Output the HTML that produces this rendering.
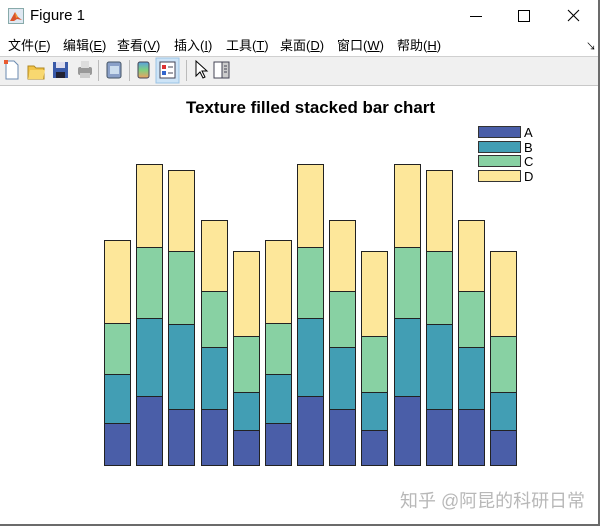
<!DOCTYPE html>
<html><head><meta charset="utf-8"><style>
body{margin:0;width:600px;height:526px;overflow:hidden;background:#fff;font-family:"Liberation Sans","Noto Sans CJK SC",sans-serif;position:relative}
.a{position:absolute}
.menu span{position:absolute;top:35px;font-size:13px;color:#000}
</style></head><body>
<div class="a" style="left:0;top:0;width:598px;height:524px;border-right:2px solid #6b6b6b;border-bottom:2px solid #6b6b6b"></div>
<!-- title bar -->
<svg class="a" style="left:8px;top:8px" width="16" height="16"><rect x="0.5" y="0.5" width="15" height="15" fill="#dfe8f2" stroke="#8aa"/><path d="M2 13 L7 4 L10 9 L14 12 L9 11 L6 13Z" fill="#d9532b"/><path d="M7 4 L10 9 L8 10Z" fill="#f09a3a"/></svg>
<div class="a" style="left:30px;top:7px;font-size:15px">Figure 1</div>
<div class="a" style="left:470px;top:16px;width:12px;height:1px;background:#000"></div>
<div class="a" style="left:518px;top:10px;width:10px;height:10px;border:1px solid #000"></div>
<svg class="a" style="left:567px;top:9px" width="13" height="13"><path d="M1 1L12 12M12 1L1 12" stroke="#000" stroke-width="1.1"/></svg>
<!-- menu -->
<div class="menu">
<span style="left:8px">文件(<u>F</u>)</span>
<span style="left:63px">编辑(<u>E</u>)</span>
<span style="left:117px">查看(<u>V</u>)</span>
<span style="left:174px">插入(<u>I</u>)</span>
<span style="left:226px">工具(<u>T</u>)</span>
<span style="left:280px">桌面(<u>D</u>)</span>
<span style="left:337px">窗口(<u>W</u>)</span>
<span style="left:397px">帮助(<u>H</u>)</span>
</div>
<div class="a" style="left:586px;top:38px;font-size:10px">↘</div>
<!-- toolbar -->
<div class="a" style="left:0;top:56px;width:598px;height:28px;background:#f0f0f0;border-top:1px solid #d0d0d0;border-bottom:1px solid #c8c8c8"></div>
<svg class="a" style="left:0;top:57px" width="240" height="27">
<path d="M6 4h8l4 4v14H6z" fill="#fff" stroke="#6a8ab0"/><rect x="4" y="3" width="4" height="4" fill="#e85a30"/>
<path d="M28 9h6l2 2h8v11H28z" fill="#f2c448" stroke="#b08820"/><path d="M30 13h15l-2 9H28z" fill="#f8d870"/>
<rect x="53" y="5" width="15" height="16" fill="#3a5aa8"/><rect x="56" y="5" width="9" height="6" fill="#dde"/><rect x="56" y="15" width="9" height="6" fill="#223"/>
<rect x="78" y="10" width="14" height="8" rx="2" fill="#999"/><rect x="81" y="4" width="8" height="7" fill="#ddd"/><rect x="80" y="16" width="10" height="5" fill="#ccc"/>
<line x1="98.5" y1="3" x2="98.5" y2="24" stroke="#bbb"/>
<rect x="107" y="5" width="14" height="16" rx="2" fill="#8aa0c8" stroke="#456"/><rect x="110" y="9" width="9" height="8" fill="#cde"/>
<line x1="129.5" y1="3" x2="129.5" y2="24" stroke="#bbb"/>
<defs><linearGradient id="g" x1="0" y1="0" x2="0" y2="1"><stop offset="0" stop-color="#5aa0e0"/><stop offset=".5" stop-color="#7ed080"/><stop offset="1" stop-color="#f0a060"/></linearGradient></defs>
<rect x="138" y="5" width="11" height="16" rx="2" fill="url(#g)" stroke="#445"/>
<rect x="156" y="1" width="23" height="25" fill="#cde4f7" stroke="#9cc3e5"/>
<rect x="160" y="5" width="15" height="16" fill="#fff" stroke="#445"/><rect x="162" y="8" width="4" height="4" fill="#d33"/><rect x="162" y="14" width="4" height="4" fill="#36c"/><path d="M168 10h5M168 16h5" stroke="#445"/>
<line x1="186.5" y1="3" x2="186.5" y2="24" stroke="#bbb"/>
<path d="M196 4v15l4-4 3 6 2-1-3-6h5z" fill="#fff" stroke="#000"/>
<rect x="214" y="5" width="15" height="16" fill="#fff" stroke="#445"/><rect x="222" y="5" width="7" height="16" fill="#ccc" stroke="#445"/><path d="M224 9h3M224 12h3M224 15h3" stroke="#445"/>
</svg>
<!-- chart -->
<svg class="a" style="left:0;top:0" width="600" height="526">
<text x="186" y="113" font-family="Liberation Sans, sans-serif" font-weight="bold" font-size="17" textLength="249" lengthAdjust="spacingAndGlyphs">Texture filled stacked bar chart</text>
<g stroke="#222" stroke-width="1">
<g id="bars"></g>
</g>
<g stroke="#333" stroke-width="1">
<rect x="478.5" y="126.5" width="42" height="11" fill="#4a5ea8"/>
<rect x="478.5" y="141.5" width="42" height="11" fill="#429eb4"/>
<rect x="478.5" y="155.5" width="42" height="11" fill="#88d1a3"/>
<rect x="478.5" y="170.5" width="42" height="11" fill="#fde79a"/>
</g>
<g font-family="Liberation Sans, sans-serif" font-size="13">
<text x="524" y="137">A</text><text x="524" y="152">B</text><text x="524" y="166">C</text><text x="524" y="181">D</text>
</g>
<text x="400" y="507" font-family="Liberation Sans, Noto Sans CJK SC, sans-serif" font-size="18" fill="#b8b8b8" textLength="185" lengthAdjust="spacingAndGlyphs">知乎 @阿昆的科研日常</text>
</svg>
<script>
var T={1:[240,323,374,423],2:[164,247,318,396],3:[170,251,324,409],4:[220,291,347,409],5:[251,336,392,430]};
var seq=[1,2,3,4,5,1,2,4,5,2,3,4,5];
var xs=[104,136,168,201,233,265,297,329,361,394,426,458,490];
var C=["#fde79a","#88d1a3","#429eb4","#4a5ea8"];
var s="";
seq.forEach(function(k,i){var t=T[k].concat([465]);for(var j=0;j<4;j++){s+='<rect x="'+(xs[i]+.5)+'" y="'+(t[j]+.5)+'" width="26" height="'+(t[j+1]-t[j])+'" fill="'+C[j]+'"/>';}});
document.getElementById("bars").innerHTML=s;
</script>
</body></html>
